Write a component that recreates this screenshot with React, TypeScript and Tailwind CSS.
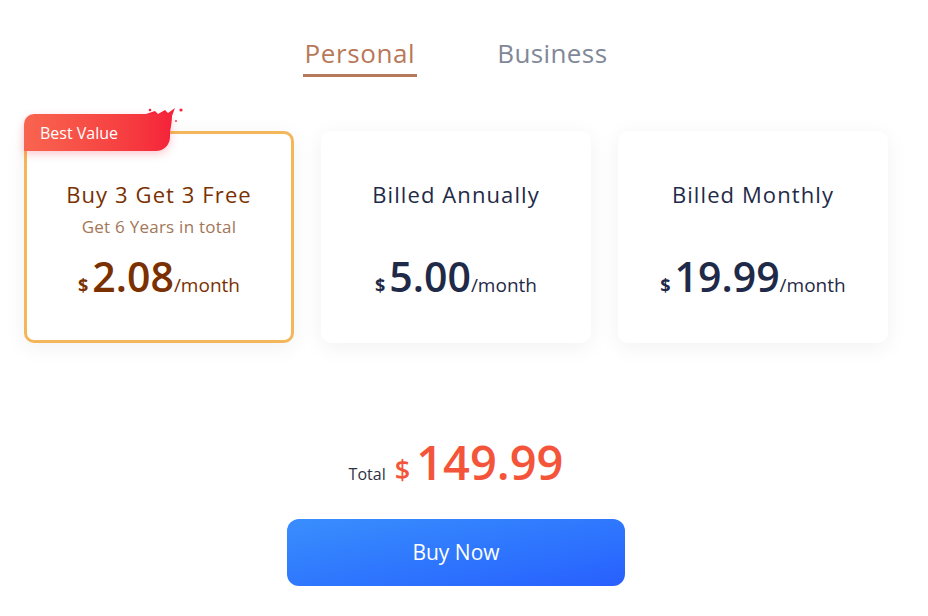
import React, { useState } from "react";

const plans = [
  { id: "b3g3", title: "Buy 3 Get 3 Free", sub: "Get 6 Years in total", price: "2.08", best: true },
  { id: "year", title: "Billed Annually", sub: "", price: "5.00", best: false },
  { id: "month", title: "Billed Monthly", sub: "", price: "19.99", best: false },
];

function Splash() {
  return (
    <svg className="absolute left-[116px] top-[-10px]" width="44" height="40" viewBox="0 0 44 40">
      <path
        d="M6 10 L15 7 L18 10 L25 6 L28 9 L35 4 L32 12 C32 17 31 22 30 28 L22 30 L6 30 Z"
        fill="#f5263a"
      />
      <circle cx="10" cy="6" r="1.3" fill="#f5263a" />
      <circle cx="41" cy="6" r="1.6" fill="#f5263a" />
      <circle cx="36" cy="17" r="0.9" fill="#f5263a" />
    </svg>
  );
}

function PlanCard({ plan, active }: { plan: (typeof plans)[number]; active: boolean }) {
  const brown = active;
  return (
    <div
      className={`relative w-[270px] h-[212px] rounded-[10px] bg-white border-[3px] pt-[45px] flex flex-col items-center shadow-[0_4px_22px_rgba(0,0,0,0.06)] ${
        active ? "border-[#f3b65a]" : "border-transparent"
      }`}
    >
      {plan.best && (
        <div className="absolute left-[-3px] top-[-20px] h-[37px] w-[146px]">
          <Splash />
          <div className="relative h-full w-full rounded-tl-[10px] rounded-tr-[3px] rounded-br-[14px] bg-gradient-to-r from-[#f8644f] to-[#f5233a] pl-[16px] flex items-center text-white text-[16px] shadow-[0_3px_8px_rgba(245,35,58,0.25)]">
            Best Value
          </div>
        </div>
      )}
      <div className={`text-[22px] leading-[30px] tracking-[1.1px] ${brown ? "text-[#7a3000]" : "text-[#1f2a48]"}`}>
        {plan.title}
      </div>
      <div className={`mt-[6px] text-[17px] leading-[24px] tracking-[0.25px] text-[#a37658] ${plan.sub ? "" : "invisible"}`}>
        {plan.sub || "-"}
      </div>
      <div className={`mt-[13px] flex items-baseline leading-[48px] ${brown ? "text-[#7a3000]" : "text-[#1f2a48]"}`}>
        <span className="text-[18px] font-bold mr-[4px]">$</span>
        <span className="text-[41px] font-semibold">{plan.price}</span>
        <span className="text-[19px]">/month</span>
      </div>
    </div>
  );
}

export default function App() {
  const [tab, setTab] = useState("personal");
  const [selected] = useState("b3g3");

  return (
    <div className="w-[928px] h-[616px] bg-white pl-[24px] overflow-hidden" style={{ fontFamily: '"Open Sans", "Noto Sans", sans-serif' }}>
      <div className="w-[864px] flex flex-col items-center">
        <div className="flex justify-center gap-[78px] pt-[35px]">
          <button
            onClick={() => setTab("personal")}
            className={`px-[2px] pb-[3px] text-[26px] leading-[36px] tracking-[0.6px] border-b-[3px] ${
              tab === "personal" ? "text-[#b8795a] border-[#b8795a]" : "text-[#7f8898] border-transparent"
            }`}
          >
            Personal
          </button>
          <button
            onClick={() => setTab("business")}
            className={`px-[2px] pb-[3px] text-[26px] leading-[36px] tracking-[0.4px] border-b-[3px] ${
              tab === "business" ? "text-[#b8795a] border-[#b8795a]" : "text-[#7f8898] border-transparent"
            }`}
          >
            Business
          </button>
        </div>

        <div className="mt-[54px] flex gap-[27px]">
          {plans.map((p) => (
            <PlanCard key={p.id} plan={p} active={p.id === selected} />
          ))}
        </div>

        <div className="mt-[89px] flex items-baseline leading-[60px]">
          <span className="text-[16px] text-[#2c3345] mr-[9px]">Total</span>
          <span className="text-[27px] font-semibold text-[#f4553a] mr-[6px]">$</span>
          <span className="text-[47px] font-semibold text-[#f4553a]">149.99</span>
        </div>

        <button className="mt-[15px] w-[338px] h-[67px] rounded-[12px] bg-gradient-to-br from-[#3a8efd] to-[#295ffe] text-white text-[21px]">
          Buy Now
        </button>
      </div>
    </div>
  );
}
